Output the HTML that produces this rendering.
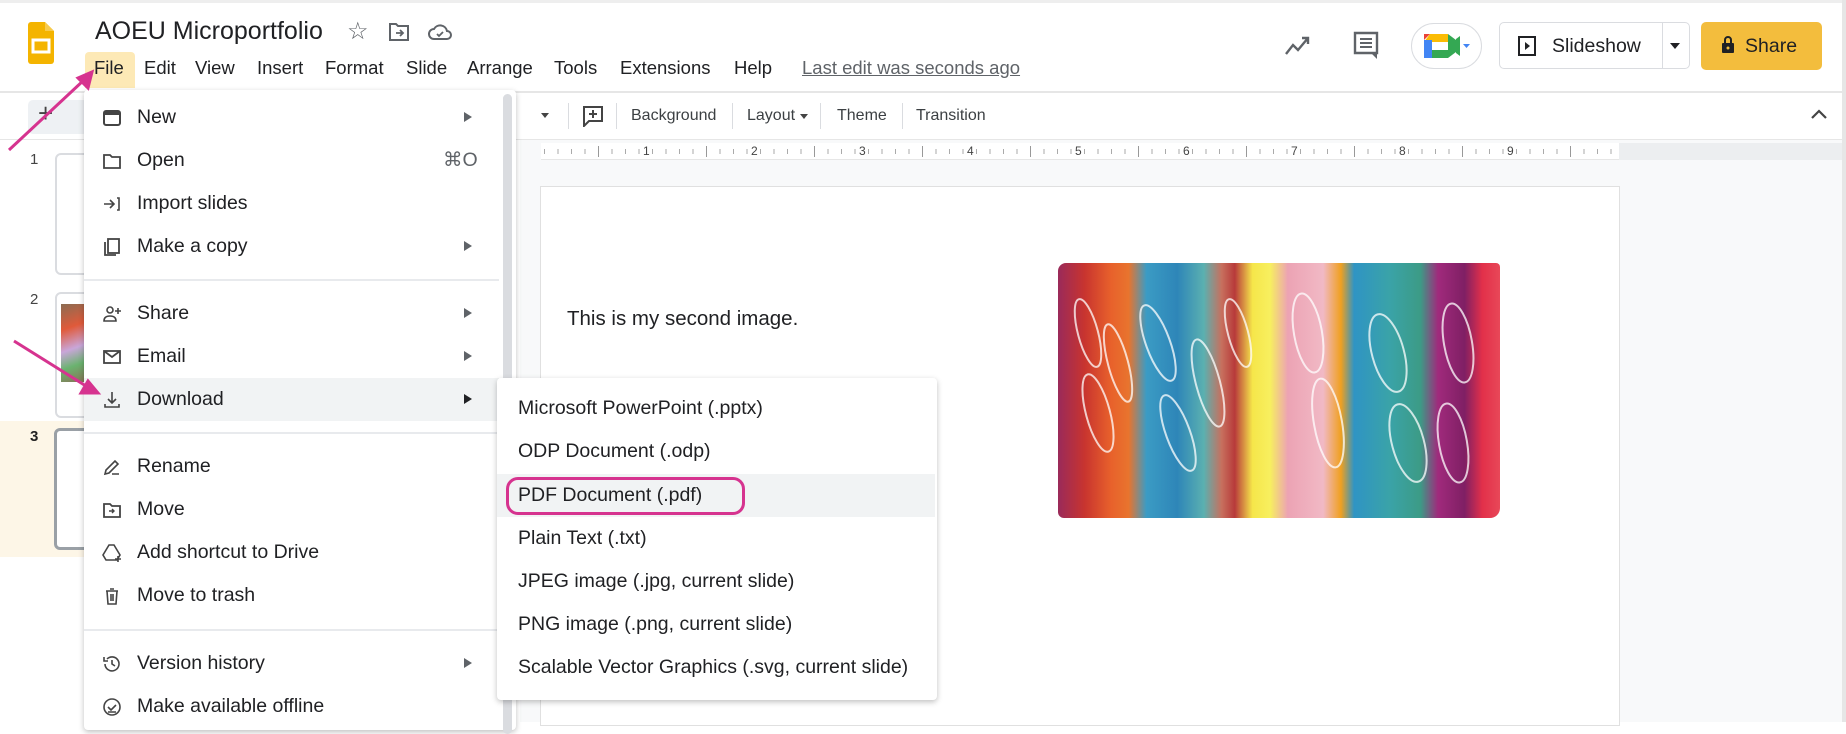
<!DOCTYPE html>
<html><head><meta charset="utf-8"><style>
*{box-sizing:border-box;margin:0;padding:0}
body{width:1846px;height:722px;overflow:hidden;background:#fff;font-family:"Liberation Sans",Arial,sans-serif;color:#202124;position:relative}
.a{position:absolute}
.mi{position:absolute;left:0;width:415px;height:43px;font-size:19.5px;line-height:43px}
.mi .t{position:absolute;left:53px}
.mi .ic{position:absolute;left:18px;top:12px;width:20px;height:20px}
.mi .ar{position:absolute;left:380px;top:16px;width:0;height:0;border-left:8px solid #5f6368;border-top:5px solid transparent;border-bottom:5px solid transparent}
.sep{position:absolute;left:0;width:415px;height:2px;background:#e8eaed}
.si{position:absolute;left:0;width:438px;height:43px;line-height:43px;font-size:19.5px;padding-left:21px}
.tb{position:absolute;top:107px;font-size:16px;color:#3c4043}
.vs{position:absolute;top:103px;width:1px;height:26px;background:#dadce0}
.mb{position:absolute;top:57px;font-size:18.5px}
.rn{position:absolute;top:144px;font-size:12px;color:#444}
</style></head><body>
<div class="a" style="left:0;top:0;width:1846px;height:3px;background:#eee"></div>
<div class="a" style="right:0;top:0;width:4px;height:722px;background:#e6e6e6"></div>
<svg class="a" style="left:28px;top:22px" width="26" height="42" viewBox="0 0 26 42"><path d="M3 0h14l9 9v30a3 3 0 0 1-3 3H3a3 3 0 0 1-3-3V3a3 3 0 0 1 3-3z" fill="#f4b400"/><path d="M17 0l9 9h-9z" fill="#f7cb4d"/><rect x="5" y="18" width="16" height="12" fill="none" stroke="#fff" stroke-width="3"/></svg>
<div class="a" style="left:95px;top:17px;font-size:25px">AOEU Microportfolio</div>
<div class="a" style="left:347px;top:17px;font-size:24px;color:#5f6368">☆</div>
<svg class="a" style="left:388px;top:22px" width="22" height="20" viewBox="0 0 22 20"><path d="M2 2h6l2 2h10v14H2z" fill="none" stroke="#5f6368" stroke-width="2"/><path d="M8 11h6M12 8l3 3-3 3" fill="none" stroke="#5f6368" stroke-width="1.8"/></svg>
<svg class="a" style="left:428px;top:22px" width="24" height="20" viewBox="0 0 24 20"><path d="M6 17a5 5 0 0 1 0-10 7 7 0 0 1 13 2 4 4 0 0 1 0 8z" fill="none" stroke="#5f6368" stroke-width="2"/><path d="M9 12l2 2 4-4" fill="none" stroke="#5f6368" stroke-width="1.8"/></svg>
<div class="a" style="left:85px;top:52px;width:50px;height:36px;background:#fde9b6;border-radius:4px 4px 0 0"></div>
<div class="mb" style="left:94px">File</div><div class="mb" style="left:144px">Edit</div><div class="mb" style="left:195px">View</div><div class="mb" style="left:257px">Insert</div><div class="mb" style="left:325px">Format</div><div class="mb" style="left:406px">Slide</div><div class="mb" style="left:467px">Arrange</div><div class="mb" style="left:554px">Tools</div><div class="mb" style="left:620px">Extensions</div><div class="mb" style="left:734px">Help</div>
<div class="a" style="left:802px;top:57px;font-size:18.5px;color:#5f6368;text-decoration:underline">Last edit was seconds ago</div>
<svg class="a" style="left:1284px;top:34px" width="28" height="22" viewBox="0 0 28 22"><path d="M2 20l7-9 5 5 10-12M18 4h6v6" fill="none" stroke="#5f6368" stroke-width="2.4"/></svg>
<svg class="a" style="left:1352px;top:31px" width="28" height="30" viewBox="0 0 28 30"><path d="M3 2h22v20H3z" fill="none" stroke="#5f6368" stroke-width="2.4"/><path d="M25 22v6l-6-6" fill="#5f6368"/><path d="M8 8h12M8 12h12M8 16h12" stroke="#5f6368" stroke-width="2"/></svg>
<div class="a" style="left:1411px;top:23px;width:71px;height:46px;border:1px solid #dadce0;border-radius:23px"></div>
<svg class="a" style="left:1424px;top:34px" width="46" height="24" viewBox="0 0 46 24"><path d="M6 0h18v8H0z" fill="#fbbc04"/><path d="M0 6v18h8V6z" fill="#4285f4"/><path d="M8 16h16v8H8z" fill="#34a853"/><path d="M24 0v24l0 0 8-6V6z" fill="#34a853"/><path d="M32 5l4-3v20l-4-3z" fill="#34a853"/><path d="M0 0h6L0 6z" fill="#ea4335"/><path d="M39 10h7l-3.5 4z" fill="#4285f4"/></svg>
<div class="a" style="left:1499px;top:22px;width:191px;height:47px;border:1px solid #dadce0;border-radius:5px"></div>
<div class="a" style="left:1662px;top:22px;width:1px;height:47px;background:#dadce0"></div>
<svg class="a" style="left:1518px;top:36px" width="18" height="20" viewBox="0 0 18 20"><rect x="1" y="1" width="16" height="18" fill="none" stroke="#202124" stroke-width="2"/><path d="M7 6l5 4-5 4z" fill="#202124"/></svg>
<div class="a" style="left:1552px;top:35px;font-size:19.5px">Slideshow</div>
<div class="a" style="left:1670px;top:43px;border-top:6px solid #202124;border-left:5px solid transparent;border-right:5px solid transparent"></div>
<div class="a" style="left:1701px;top:22px;width:121px;height:48px;background:#f3bd3d;border-radius:5px"></div>
<svg class="a" style="left:1721px;top:36px" width="14" height="18" viewBox="0 0 14 18"><rect x="1" y="7" width="12" height="10" rx="1" fill="#202124"/><path d="M4 7V4a3 3 0 0 1 6 0v3" fill="none" stroke="#202124" stroke-width="2"/><circle cx="7" cy="12" r="1.5" fill="#f3bd3d"/></svg>
<div class="a" style="left:1745px;top:35px;font-size:19.5px">Share</div>
<div class="a" style="left:0;top:91px;width:1842px;height:2px;background:#e6e6e6"></div>
<div class="a" style="left:28px;top:100px;width:60px;height:34px;background:#eef1f4;border-radius:5px"></div>
<div class="a" style="left:38px;top:98px;font-size:26px;color:#444">+</div>
<div class="a" style="left:541px;top:113px;border-top:5px solid #444;border-left:4px solid transparent;border-right:4px solid transparent"></div>
<div class="vs" style="left:568px"></div>
<svg class="a" style="left:582px;top:105px" width="22" height="22" viewBox="0 0 22 22"><path d="M2 2h18v14H7l-5 5z" fill="none" stroke="#444" stroke-width="2"/><path d="M11 5v8M7 9h8" stroke="#444" stroke-width="2"/></svg>
<div class="vs" style="left:616px"></div>
<div class="tb" style="left:631px">Background</div>
<div class="vs" style="left:732px"></div>
<div class="tb" style="left:747px">Layout</div>
<div class="a" style="left:800px;top:114px;border-top:5px solid #444;border-left:4px solid transparent;border-right:4px solid transparent"></div>
<div class="vs" style="left:820px"></div>
<div class="tb" style="left:837px">Theme</div>
<div class="vs" style="left:902px"></div>
<div class="tb" style="left:916px">Transition</div>
<svg class="a" style="left:1810px;top:108px" width="18" height="12" viewBox="0 0 18 12"><path d="M2 10l7-7 7 7" fill="none" stroke="#444" stroke-width="2.2"/></svg>
<div class="a" style="left:0;top:139px;width:1842px;height:1px;background:#e6e6e6"></div>
<div class="a" style="left:520px;top:140px;width:1322px;height:582px;background:#f8f9fa"></div>
<div class="a" style="left:541px;top:143px;width:1078px;height:17px;background:#fff;border-bottom:1px solid #e6e6e6"></div>
<div class="a" style="left:1619px;top:143px;width:223px;height:17px;background:#eceef0"></div>
<div class="a" style="left:544px;top:149px;width:1070px;height:5px;background:repeating-linear-gradient(90deg,#aaa 0 1px,transparent 1px 13.5px)"></div>
<div class="a" style="left:598px;top:146px;width:1016px;height:11px;background:repeating-linear-gradient(90deg,#999 0 1px,transparent 1px 108px)"></div>
<div class="rn" style="left:643px">1</div><div class="rn" style="left:751px">2</div><div class="rn" style="left:859px">3</div><div class="rn" style="left:967px">4</div><div class="rn" style="left:1075px">5</div><div class="rn" style="left:1183px">6</div><div class="rn" style="left:1291px">7</div><div class="rn" style="left:1399px">8</div><div class="rn" style="left:1507px">9</div>
<div class="a" style="left:540px;top:186px;width:1080px;height:540px;background:#fff;border:1px solid #e0e0e0"></div>
<div class="a" style="left:567px;top:307px;font-size:20.5px">This is my second image.</div>
<div class="a" style="left:1058px;top:263px;width:442px;height:255px;background:linear-gradient(90deg,#9a2a5a 0%,#c8342f 6%,#e8612b 12%,#e8742e 16%,#3b9bc4 20%,#2e86b8 27%,#5bb0b0 33%,#c7705e 37%,#b83a3a 40%,#f6e64a 44%,#f7ef5f 48%,#eca3b4 52%,#f1b9c5 60%,#f0a020 64%,#2f94c4 67%,#3aa3a8 75%,#3c9b86 82%,#a02a7c 86%,#7f1f64 92%,#e2304a 96%,#e84858 100%);border-radius:8px 4px 10px 6px"></div>
<svg class="a" style="left:1058px;top:263px" width="442" height="255"><g fill="none" stroke="#fff" stroke-width="2" opacity=".75">
<ellipse cx="30" cy="70" rx="10" ry="35" transform="rotate(-15 30 70)"/><ellipse cx="40" cy="150" rx="12" ry="40" transform="rotate(-15 40 150)"/><ellipse cx="60" cy="100" rx="10" ry="40" transform="rotate(-15 60 100)"/><ellipse cx="100" cy="80" rx="12" ry="40" transform="rotate(-20 100 80)"/><ellipse cx="120" cy="170" rx="12" ry="40" transform="rotate(-20 120 170)"/><ellipse cx="150" cy="120" rx="12" ry="45" transform="rotate(-15 150 120)"/><ellipse cx="180" cy="70" rx="10" ry="35" transform="rotate(-15 180 70)"/><ellipse cx="250" cy="70" rx="14" ry="40" transform="rotate(-10 250 70)"/><ellipse cx="270" cy="160" rx="14" ry="45" transform="rotate(-10 270 160)"/><ellipse cx="330" cy="90" rx="16" ry="40" transform="rotate(-15 330 90)"/><ellipse cx="350" cy="180" rx="16" ry="40" transform="rotate(-15 350 180)"/><ellipse cx="400" cy="80" rx="14" ry="40" transform="rotate(-10 400 80)"/><ellipse cx="395" cy="180" rx="14" ry="40" transform="rotate(-10 395 180)"/></g></svg>
<div class="a" style="left:0;top:421px;width:85px;height:136px;background:#fdf6e7"></div>
<div class="a" style="left:30px;top:151px;font-size:15px;color:#444">1</div>
<div class="a" style="left:55px;top:153px;width:40px;height:122px;border:2px solid #dadce0;border-radius:6px;background:#fff"></div>
<div class="a" style="left:30px;top:291px;font-size:15px;color:#444">2</div>
<div class="a" style="left:55px;top:292px;width:40px;height:126px;border:2px solid #dadce0;border-radius:6px;background:#fff"></div>
<div class="a" style="left:61px;top:304px;width:30px;height:78px;background:linear-gradient(160deg,#8b6c52,#e05a3a 30%,#c9a6d9 55%,#6ab36f 75%,#8b6c52)"></div>
<div class="a" style="left:30px;top:428px;font-size:15px;color:#222;font-weight:bold">3</div>
<div class="a" style="left:54px;top:428px;width:40px;height:122px;border:3px solid #9aa0a6;border-radius:6px;background:#fff"></div>
<div class="a" style="left:84px;top:90px;width:432px;height:640px;background:#fff;box-shadow:0 2px 6px rgba(0,0,0,.25);border-radius:4px">
<div class="a" style="left:419px;top:4px;width:9px;height:640px;background:#dadce0;border-radius:5px"></div>
<div class="mi" style="top:6px"><svg class="ic" viewBox="0 0 20 20"><rect x="2" y="3" width="16" height="14" rx="2" fill="none" stroke="#444" stroke-width="2"/><rect x="2" y="3" width="16" height="4" fill="#444"/></svg><span class="t">New</span><i class="ar"></i></div>
<div class="mi" style="top:49px"><svg class="ic" viewBox="0 0 20 20"><path d="M2 4h6l2 2h8v11H2z" fill="none" stroke="#444" stroke-width="1.8"/></svg><span class="t">Open</span><span style="position:absolute;left:359px;color:#5f6368">⌘O</span></div>
<div class="mi" style="top:92px"><svg class="ic" viewBox="0 0 20 20"><path d="M2 10h10M8 6l4 4-4 4M15 4h2v12h-2" fill="none" stroke="#444" stroke-width="1.6"/></svg><span class="t">Import slides</span></div>
<div class="mi" style="top:135px"><svg class="ic" viewBox="0 0 20 20"><rect x="6" y="2" width="11" height="14" fill="none" stroke="#444" stroke-width="1.8"/><path d="M3 5v13h11" fill="none" stroke="#444" stroke-width="1.8"/></svg><span class="t">Make a copy</span><i class="ar"></i></div>
<div class="sep" style="top:189px"></div>
<div class="mi" style="top:202px"><svg class="ic" viewBox="0 0 20 20"><circle cx="8" cy="6" r="3" fill="none" stroke="#444" stroke-width="1.6"/><path d="M2 17c0-4 3-5 6-5s6 1 6 5z" fill="none" stroke="#444" stroke-width="1.6"/><path d="M16 4v6M13 7h6" stroke="#444" stroke-width="1.6"/></svg><span class="t">Share</span><i class="ar"></i></div>
<div class="mi" style="top:245px"><svg class="ic" viewBox="0 0 20 20"><rect x="2" y="4" width="16" height="12" fill="none" stroke="#444" stroke-width="1.8"/><path d="M2 4l8 6 8-6" fill="none" stroke="#444" stroke-width="1.8"/></svg><span class="t">Email</span><i class="ar"></i></div>
<div class="mi" style="top:288px;background:#f1f3f4"><svg class="ic" viewBox="0 0 20 20"><path d="M10 2v11M6 9l4 4 4-4M3 14v3h14v-3" fill="none" stroke="#444" stroke-width="1.6"/></svg><span class="t">Download</span><i class="ar" style="border-left-color:#202124"></i></div>
<div class="sep" style="top:342px"></div>
<div class="mi" style="top:355px"><svg class="ic" viewBox="0 0 20 20"><path d="M3 17l1-4 9-9 3 3-9 9zM10 17h7" fill="none" stroke="#444" stroke-width="1.6"/></svg><span class="t">Rename</span></div>
<div class="mi" style="top:398px"><svg class="ic" viewBox="0 0 20 20"><path d="M2 4h6l2 2h8v11H2z" fill="none" stroke="#444" stroke-width="1.8"/><path d="M7 11h5M10 9l2 2-2 2" fill="none" stroke="#444" stroke-width="1.4"/></svg><span class="t">Move</span></div>
<div class="mi" style="top:441px"><svg class="ic" viewBox="0 0 20 20"><path d="M7 2h5l6 10-3 5H4l-3-5z" fill="none" stroke="#444" stroke-width="1.6"/><path d="M16 13v6M13 16h6" stroke="#444" stroke-width="1.6"/></svg><span class="t">Add shortcut to Drive</span></div>
<div class="mi" style="top:484px"><svg class="ic" viewBox="0 0 20 20"><path d="M4 5h12M8 3h4M5 5l1 13h8l1-13M9 8v7M11 8v7" fill="none" stroke="#444" stroke-width="1.6"/></svg><span class="t">Move to trash</span></div>
<div class="sep" style="top:539px"></div>
<div class="mi" style="top:552px"><svg class="ic" viewBox="0 0 20 20"><path d="M3 10a7 7 0 1 0 2-5M2 3v4h4M10 6v4l3 2" fill="none" stroke="#444" stroke-width="1.6"/></svg><span class="t">Version history</span><i class="ar"></i></div>
<div class="mi" style="top:595px"><svg class="ic" viewBox="0 0 20 20"><circle cx="10" cy="10" r="8" fill="none" stroke="#444" stroke-width="1.6"/><path d="M6 10l3 3 5-5M6 15h8" fill="none" stroke="#444" stroke-width="1.6"/></svg><span class="t">Make available offline</span></div>
</div>
<div class="a" style="left:497px;top:378px;width:440px;height:322px;background:#fff;box-shadow:0 2px 6px rgba(0,0,0,.25);border-radius:4px">
<div class="si" style="top:9px">Microsoft PowerPoint (.pptx)</div>
<div class="si" style="top:52px">ODP Document (.odp)</div>
<div class="si" style="top:96px;background:#f1f3f4">PDF Document (.pdf)</div>
<div class="si" style="top:139px">Plain Text (.txt)</div>
<div class="si" style="top:182px">JPEG image (.jpg, current slide)</div>
<div class="si" style="top:225px">PNG image (.png, current slide)</div>
<div class="si" style="top:268px">Scalable Vector Graphics (.svg, current slide)</div>
</div>
<div class="a" style="left:506px;top:477px;width:239px;height:38px;border:3px solid #d6338f;border-radius:12px"></div>
<svg class="a" style="left:0;top:0" width="140" height="420"><g stroke="#d6338f" stroke-width="3" fill="#d6338f"><path d="M9 150L84 80"/><path d="M92 72l-4 16-10-10z"/><path d="M14 341L86 386"/><path d="M98 393l-17 0 7-12z"/></g></svg>
</body></html>
